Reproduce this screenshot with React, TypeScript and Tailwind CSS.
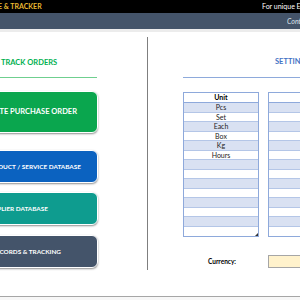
import React from "react";

const units = ["Pcs", "Set", "Each", "Box", "Kg", "Hours", "", "", "", "", "", "", "", ""];

function Btn({ color, text, pr, h, mt, fs }: { color: string; text: string; pr: string; h: string; mt: string; fs: string }) {
  return (
    <div
      className={`${color} ${pr} ${h} ${mt} ${fs} ml-[-80px] w-[178px] shrink-0 rounded-[6px] border-[1.5px] border-white shadow-[0_1px_2px_rgba(0,0,0,0.45)] flex items-center justify-end text-white font-bold whitespace-nowrap overflow-hidden`}
    >
      {text}
    </div>
  );
}

function Table({ header, rows }: { header: string; rows: string[] }) {
  return (
    <div className="w-[76px] border border-[#8ea9db] shrink-0 relative">
      <div className="h-[10px] flex items-center justify-center text-[7px] font-bold text-black bg-white border-b border-[#8ea9db]">
        {header}
      </div>
      {rows.map((r, i) => (
        <div
          key={i}
          className={`h-[9.5px] flex items-center justify-center text-[7px] text-[#222] ${i % 2 === 0 ? "bg-[#d9e1f2]" : "bg-white"} ${i < rows.length - 1 ? "border-b border-[#b4c6e7]" : ""}`}
        >
          {r}
        </div>
      ))}
    </div>
  );
}

export default function App() {
  return (
    <div
      className="w-[300px] h-[300px] overflow-hidden bg-white relative"
      style={{ fontFamily: "Lato, 'Open Sans', sans-serif" }}
    >
      <div className="h-[13px] bg-black flex items-center justify-between overflow-hidden">
        <span className="text-[#e8b830] text-[7px] font-bold ml-[-2px] whitespace-nowrap">E &amp; TRACKER</span>
        <span className="text-white text-[7px] whitespace-nowrap w-[38px] overflow-hidden">For unique Ex</span>
      </div>
      <div className="h-[16px] bg-[#44546a] flex items-center justify-end overflow-hidden">
        <span className="text-[#dde2ea] text-[7px] italic whitespace-nowrap w-[13px] overflow-hidden">Cont</span>
      </div>
      <div className="h-[3px] bg-[#ececec]" />
      <div className="h-[265px] border-b border-[#a6a6a6] flex overflow-hidden">
        <div className="w-[148px] shrink-0 mt-[5px] h-[233px] border-r border-[#7f7f7f] flex flex-col">
          <div className="h-[40px] shrink-0 flex items-end pb-[9px]">
            <span className="text-[#00b050] font-bold text-[7.5px] ml-[1px] whitespace-nowrap">TRACK ORDERS</span>
          </div>
          <div className="w-[97px] h-[1px] shrink-0 bg-[#6fcf8f]" />
          <Btn color="bg-[#0aa64e]" text="CREATE PURCHASE ORDER" pr="pr-[20px]" h="h-[42px]" mt="mt-[13px]" fs="text-[7.5px]" />
          <Btn color="bg-[#0b62c0]" text="PRODUCT / SERVICE DATABASE" pr="pr-[16px]" h="h-[33px]" mt="mt-[17px]" fs="text-[6.4px]" />
          <Btn color="bg-[#0e9c8f]" text="SUPPLIER DATABASE" pr="pr-[49px]" h="h-[33px]" mt="mt-[9px]" fs="text-[6.4px]" />
          <Btn color="bg-[#44546a]" text="PO RECORDS & TRACKING" pr="pr-[36px]" h="h-[33px]" mt="mt-[10px]" fs="text-[6.4px]" />
        </div>
        <div className="flex-1 min-w-0 flex flex-col overflow-hidden">
          <div className="h-[45px] shrink-0 flex items-end pb-[10px]">
            <span className="text-[#4472c4] font-bold text-[7.5px] ml-[127px] whitespace-nowrap">SETTINGS</span>
          </div>
          <div className="ml-[35px] h-[1px] shrink-0 bg-[#8eaadb]" />
          <div className="flex gap-[9px] ml-[35px] mt-[14px] shrink-0">
            <div className="relative shrink-0">
              <Table header="Unit" rows={units} />
              <div className="absolute right-[1px] bottom-[1px] w-0 h-0 border-l-[3px] border-l-transparent border-b-[3px] border-b-[#333]" />
            </div>
            <Table header="" rows={units.map(() => "")} />
          </div>
          <div className="flex items-center mt-[18px] h-[13px] shrink-0">
            <span className="ml-[60px] w-[60px] shrink-0 text-[6.5px] font-bold text-black">Currency:</span>
            <div className="w-[40px] shrink-0 h-[13px] bg-[#fff2cc] border border-[#a6a6a6]" />
          </div>
        </div>
      </div>
      <div className="h-[10px] bg-[#f7f7f7]" />
    </div>
  );
}
